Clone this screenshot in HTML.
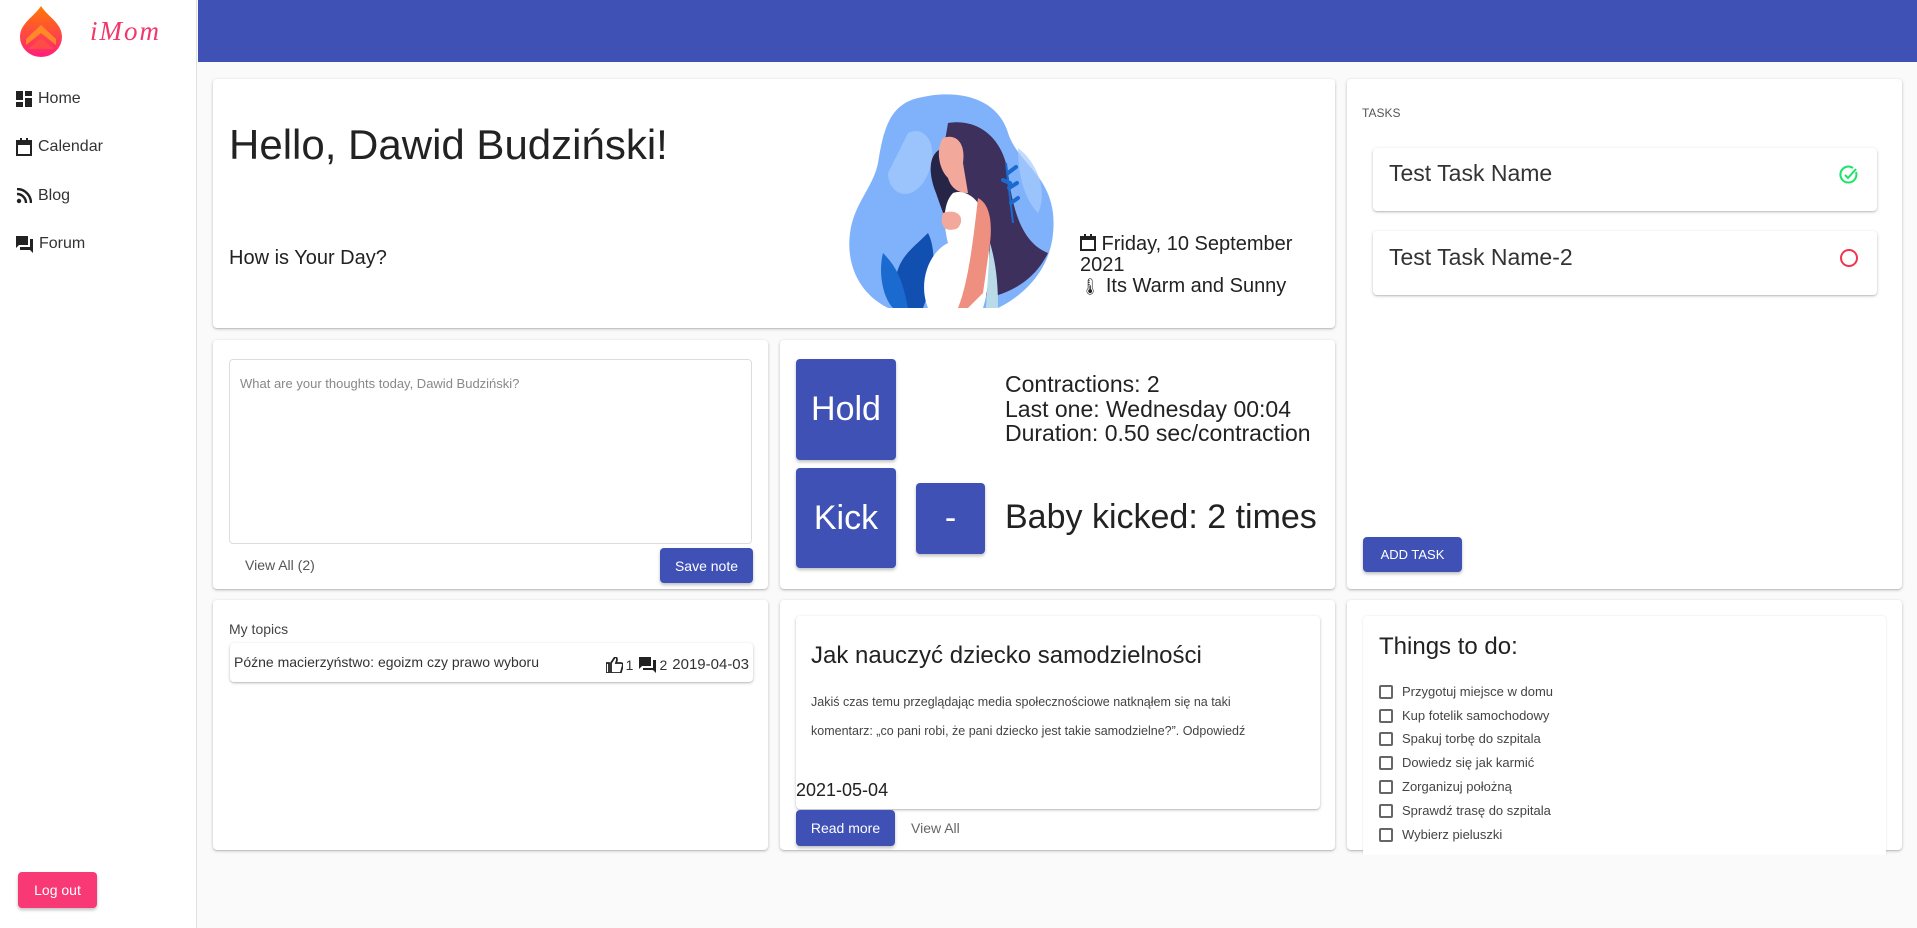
<!DOCTYPE html>
<html><head><meta charset="utf-8"><style>
*{box-sizing:border-box;margin:0;padding:0}
body{width:1917px;height:928px;overflow:hidden;background:#fafafa;font-family:"Liberation Sans",sans-serif;color:#222;position:relative}
.a{position:absolute}
.card{position:absolute;background:#fff;border-radius:4px;box-shadow:0 1px 3px rgba(0,0,0,.22),0 1px 1px rgba(0,0,0,.1)}
.btn{position:absolute;background:#3f51b5;color:#fff;border-radius:4px;box-shadow:0 2px 3px rgba(0,0,0,.25);display:flex;align-items:center;justify-content:center}
.nav{position:absolute;left:16px;font-size:16px;color:#333;display:flex;align-items:center}
.nav svg{margin-right:6px}
.cb{position:absolute;left:1379px;font-size:13px;color:#444;display:flex;align-items:center}
.cb i{display:inline-block;width:14px;height:14px;border:2px solid #666;border-radius:2px;margin-right:9px}
</style></head><body>
<div class="a" style="left:0;top:0;width:197px;height:928px;background:#fff;border-right:1px solid #e0e0e0"></div>
<svg class="a" style="left:18px;top:5px" width="46" height="52" viewBox="0 0 46 52">
<defs><linearGradient id="g" x1="0" y1="0" x2="0" y2="1"><stop offset="0" stop-color="#ff7a00"/><stop offset="1" stop-color="#ff1f7a"/></linearGradient></defs>
<path d="M23 1 C30 12 44 18 44 32 A21 20 0 0 1 2 32 C2 18 16 12 23 1Z" fill="url(#g)"/>
<path d="M8 34 L23 20 L38 34 L38 40 L23 28 L8 40Z" fill="#ff9a20" opacity=".8"/>
<path d="M10 44 L23 33 L36 44" fill="#ff5a3a" opacity=".6"/>
</svg>
<div class="a" style="left:90px;top:16px;font-family:'Liberation Serif',serif;font-style:italic;font-size:27px;color:#f0386b;letter-spacing:2px">iMom</div>
<div class="nav" style="top:90px"><svg width="16" height="16" viewBox="0 0 16 16"><path d="M0 0h7v9H0zM9 0h7v5H9zM9 7h7v9H9zM0 11h7v5H0z" fill="#222"/></svg>Home</div>
<div class="nav" style="top:138px"><svg width="16" height="18" viewBox="0 0 16 18"><path d="M1 3h14v14H1z" fill="none" stroke="#222" stroke-width="2"/><path d="M1 3h14v4H1zM4 0h2v4H4zM10 0h2v4h-2z" fill="#222"/></svg>Calendar</div>
<div class="nav" style="top:187px"><svg width="16" height="16" viewBox="0 0 16 16"><circle cx="3" cy="13" r="2.2" fill="#222"/><path d="M1 6a9 9 0 0 1 9 9M1 1a14 14 0 0 1 14 14" fill="none" stroke="#222" stroke-width="2.4"/></svg>Blog</div>
<div class="nav" style="top:235px"><svg width="17" height="17" viewBox="0 0 17 17"><path d="M0 0h12v9H3l-3 3z" fill="#222"/><path d="M14 3h3v14l-3-3H4v-3h10z" fill="#222"/></svg>Forum</div>
<div class="a" style="left:18px;top:872px;width:79px;height:36px;background:#f93876;border-radius:4px;color:#fff;font-size:14px;display:flex;align-items:center;justify-content:center;box-shadow:0 2px 3px rgba(0,0,0,.25)">Log out</div>

<div class="a" style="left:198px;top:0;width:1719px;height:62px;background:#3f51b5"></div>

<div class="card" style="left:213px;top:79px;width:1122px;height:249px"></div>
<div class="a" style="left:229px;top:121px;font-size:42px;color:#222">Hello, Dawid Budziński!</div>
<div class="a" style="left:229px;top:247px;font-size:20px;color:#222">How is Your Day?</div>
<svg class="a" style="left:848px;top:93px" width="230" height="220" viewBox="0 0 230 220">
<path d="M70 5 C110 -5 150 5 160 40 C170 70 200 80 205 120 C210 170 180 200 150 215 L40 215 C10 200 -2 170 2 140 C6 110 25 95 30 70 C35 40 40 12 70 5Z" fill="#7fb2fb"/>
<path d="M60 40 C80 30 95 60 75 90 C60 110 40 100 40 80Z" fill="#a6cafc" opacity=".7"/>
<path d="M170 55 C190 70 200 100 190 120 C180 110 170 90 170 55Z" fill="#a6cafc" opacity=".7"/>
<path d="M80 140 C60 160 40 170 50 215 L75 215 C85 190 90 160 80 140Z" fill="#1150b0"/>
<path d="M35 160 C30 180 35 205 45 215 L60 215 C55 190 50 175 35 160Z" fill="#1a6ad0"/>
<path d="M100 30 C130 25 155 45 160 80 C165 120 175 150 200 160 C185 190 160 200 140 205 L110 150 L95 60Z" fill="#3d305c"/>
<path d="M95 55 C80 60 80 80 88 100 C95 120 100 135 105 140 L115 130 L105 80Z" fill="#262447"/>
<path d="M95 45 C108 40 118 50 115 70 L120 100 C110 100 103 95 100 85 C90 75 88 55 95 45Z" fill="#f2a89a"/>
<path d="M105 100 C120 95 138 110 140 140 C143 175 140 200 135 215 L80 215 C70 190 80 160 100 150 C95 130 95 110 105 100Z" fill="#fff"/>
<path d="M130 105 C140 110 145 125 142 150 L135 200 L120 215 L110 215 C120 190 125 150 130 105Z" fill="#ee8f80"/>
<path d="M142 150 L138 215 L150 215 C150 190 148 170 142 150Z" fill="#b9dbe8"/>
<path d="M95 120 C110 115 118 125 110 135 C100 140 90 135 95 120Z" fill="#f2a89a"/>
<path d="M158 70 L165 130" stroke="#1a6ad0" stroke-width="2"/><path d="M160 80 l8 -6 M161 95 l8 -5 M163 110 l7 -5 M162 90 l-7 -3" stroke="#1a6ad0" stroke-width="4" stroke-linecap="round"/>
</svg>
<div class="a" style="left:1080px;top:234px;font-size:20px;line-height:21px;color:#222">
<svg width="16" height="17" viewBox="0 0 16 17" style="vertical-align:-1px"><path d="M1 3h14v13H1z" fill="none" stroke="#222" stroke-width="2"/><path d="M1 3h14v3H1zM4 0h2v3H4zM10 0h2v3h-2z" fill="#222"/></svg> Friday, 10 September<br>2021<br><span style="font-size:16px">🌡</span> Its Warm and Sunny</div>

<div class="card" style="left:1347px;top:79px;width:555px;height:510px"></div>
<div class="a" style="left:1362px;top:106px;font-size:12px;color:#555">TASKS</div>
<div class="card" style="left:1373px;top:148px;width:504px;height:63px"></div>
<div class="a" style="left:1389px;top:160px;font-size:23px;color:#333">Test Task Name</div>
<svg class="a" style="left:1839px;top:165px" width="20" height="20" viewBox="0 0 20 20"><path d="M17 7 A8 8 0 1 1 14 3" fill="none" stroke="#1de36a" stroke-width="2"/><path d="M6 10 l3 3 l8 -9" fill="none" stroke="#1de36a" stroke-width="2"/></svg>
<div class="card" style="left:1373px;top:231px;width:504px;height:64px"></div>
<div class="a" style="left:1389px;top:244px;font-size:23px;color:#333">Test Task Name-2</div>
<svg class="a" style="left:1839px;top:248px" width="20" height="20" viewBox="0 0 20 20"><circle cx="10" cy="10" r="8" fill="none" stroke="#f3344f" stroke-width="2"/></svg>
<div class="btn" style="left:1363px;top:537px;width:99px;height:35px;font-size:13px">ADD TASK</div>

<div class="card" style="left:213px;top:340px;width:555px;height:249px"></div>
<div class="a" style="left:229px;top:359px;width:523px;height:185px;border:1px solid #ddd;border-radius:4px"></div>
<div class="a" style="left:240px;top:376px;font-size:13px;color:#888">What are your thoughts today, Dawid Budziński?</div>
<div class="a" style="left:245px;top:557px;font-size:14px;color:#555">View All (2)</div>
<div class="btn" style="left:660px;top:548px;width:93px;height:35px;font-size:14px">Save note</div>

<div class="card" style="left:780px;top:340px;width:555px;height:249px"></div>
<div class="btn" style="left:796px;top:359px;width:100px;height:101px;font-size:34px">Hold</div>
<div class="btn" style="left:796px;top:468px;width:100px;height:100px;font-size:34px">Kick</div>
<div class="btn" style="left:916px;top:483px;width:69px;height:71px;font-size:34px">-</div>
<div class="a" style="left:1005px;top:372px;font-size:23px;line-height:24.5px;color:#222;font-weight:300">Contractions: 2<br>Last one: Wednesday 00:04<br>Duration: 0.50 sec/contraction</div>
<div class="a" style="left:1005px;top:498px;font-size:34px;color:#222">Baby kicked: 2 times</div>

<div class="card" style="left:213px;top:600px;width:555px;height:250px"></div>
<div class="a" style="left:229px;top:621px;font-size:14px;color:#444">My topics</div>
<div class="card" style="left:230px;top:643px;width:523px;height:39px"></div>
<div class="a" style="left:234px;top:654px;font-size:14px;color:#333">Późne macierzyństwo: egoizm czy prawo wyboru</div>
<div class="a" style="left:589px;top:651px;width:160px;font-size:14px;color:#333;display:flex;align-items:flex-end;justify-content:flex-end;height:22px">
<svg width="17" height="16" viewBox="0 0 17 16"><path d="M0 6h3v10H0zM5 6l4-6c2 0 2 2 2 3l-1 3h5c1 0 2 1 2 2l-2 7c0 1-1 1-2 1H5z" fill="none" stroke="#222" stroke-width="1.8"/></svg><span style="margin:0 6px 0 3px">1</span>
<svg width="17" height="16" viewBox="0 0 17 16"><path d="M0 0h12v9H3l-3 3z" fill="#222"/><path d="M14 3h3v13l-3-3H4v-2h10z" fill="#222"/></svg><span style="margin:0 5px 0 3px">2</span><span style="font-size:15px">2019-04-03</span></div>

<div class="card" style="left:780px;top:600px;width:555px;height:250px"></div>
<div class="card" style="left:796px;top:616px;width:524px;height:193px"></div>
<div class="a" style="left:811px;top:642px;font-size:24px;color:#222;font-weight:300">Jak nauczyć dziecko samodzielności</div>
<div class="a" style="left:811px;top:688px;font-size:12.5px;line-height:29px;color:#444">Jakiś czas temu przeglądając media społecznościowe natknąłem się na taki<br>komentarz: „co pani robi, że pani dziecko jest takie samodzielne?”. Odpowiedź</div>
<div class="a" style="left:796px;top:780px;font-size:18px;color:#222">2021-05-04</div>
<div class="btn" style="left:796px;top:810px;width:99px;height:36px;font-size:14px">Read more</div>
<div class="a" style="left:911px;top:820px;font-size:14px;color:#666">View All</div>

<div class="card" style="left:1347px;top:600px;width:555px;height:250px"></div>
<div class="a" style="left:1363px;top:616px;width:523px;height:240px;background:#fff;border-radius:4px 4px 0 0;box-shadow:0 0 2px rgba(0,0,0,.12)"></div>
<div class="a" style="left:1379px;top:633px;font-size:24px;color:#222;font-weight:300">Things to do:</div>
<div class="cb" style="top:684px"><i></i>Przygotuj miejsce w domu</div>
<div class="cb" style="top:708px"><i></i>Kup fotelik samochodowy</div>
<div class="cb" style="top:731px"><i></i>Spakuj torbę do szpitala</div>
<div class="cb" style="top:755px"><i></i>Dowiedz się jak karmić</div>
<div class="cb" style="top:779px"><i></i>Zorganizuj położną</div>
<div class="cb" style="top:803px"><i></i>Sprawdź trasę do szpitala</div>
<div class="cb" style="top:827px"><i></i>Wybierz pieluszki</div>
<div class="a" style="left:1347px;top:855px;width:570px;height:73px;background:#fafafa"></div>
</body></html>
